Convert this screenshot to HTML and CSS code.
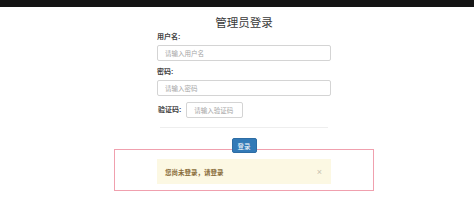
FILE: index.html
```html
<!DOCTYPE html>
<html lang="zh-CN">
<head>
  <meta charset="UTF-8" />
  <title>管理员登录</title>
  <link rel="stylesheet" href="styles.css">
</head>
<body>
  <div class="topbar"></div>

  <div class="page">
    <h1 class="title">管理员登录</h1>

    <form class="login-form">
      <label class="field-label">用户名:</label>
      <input class="field-input" type="text" placeholder="请输入用户名">

      <label class="field-label">密码:</label>
      <input class="field-input" type="password" placeholder="请输入密码">

      <div class="captcha-row">
        <label class="field-label inline">验证码:</label>
        <input class="field-input captcha-input" type="text" placeholder="请输入验证码">
      </div>

      <hr class="divider">

      <div class="submit-row">
        <button type="button" class="login-btn">登录</button>
      </div>
    </form>

    <div class="notice-box">
      <div class="alert">
        <span class="alert-text">您尚未登录，请登录</span>
        <span class="alert-close">×</span>
      </div>
    </div>
  </div>
</body>
</html>
```

FILE: styles.css
```css
body {
  margin: 0;
  background-color: #fff;
  font-family: "Liberation Sans", "Noto Sans CJK SC", sans-serif;
  color: #333;
}

.topbar {
  height: 7px;
  background-color: #141414;
}

.page {
  padding-left: 14px;
  display: flex;
  flex-direction: column;
  align-items: center;
}

.title {
  margin: 9px 0 0;
  font-size: 11.5px;
  line-height: 14px;
  font-weight: normal;
  color: #3a3a3a;
}

.login-form {
  width: 174px;
  margin-top: 2px;
  display: flex;
  flex-direction: column;
}

.field-label {
  font-size: 7px;
  line-height: 10px;
  font-weight: bold;
  color: #444;
}

.field-input {
  box-sizing: border-box;
  height: 16px;
  margin: 3px 0 6px;
  padding: 0 7px;
  border: 1px solid #d4d4d4;
  border-radius: 2px;
  font-family: inherit;
  font-size: 6.5px;
  outline: none;
}

.field-input::placeholder {
  color: #a5a5a5;
}

.captcha-row {
  display: flex;
  align-items: center;
  gap: 5px;
}

.captcha-row .field-label {
  margin-left: 1px;
}

.captcha-input {
  width: 57px;
  margin: 0;
}

.divider {
  margin: 9px 3px 0;
  border: none;
  border-top: 1px solid #eee;
}

.submit-row {
  display: flex;
  justify-content: center;
  margin-top: 10px;
  position: relative;
  z-index: 1;
}

.login-btn {
  width: 25px;
  height: 15px;
  padding: 0;
  border: 1px solid #2e6da4;
  border-radius: 2px;
  background-color: #337ab7;
  color: #fff;
  font-family: inherit;
  font-size: 6.5px;
  cursor: pointer;
}

.notice-box {
  width: 260px;
  box-sizing: border-box;
  margin-top: -4px;
  padding: 9px 0 6px;
  border: 1px solid #f0a0ae;
  display: flex;
  justify-content: center;
}

.alert {
  width: 174px;
  height: 25px;
  box-sizing: border-box;
  padding: 0 8px;
  background-color: #fcf8e3;
  display: flex;
  align-items: center;
  justify-content: space-between;
  color: #8a6d3b;
}

.alert-text {
  font-size: 6.5px;
  font-weight: bold;
}

.alert-close {
  font-size: 9px;
  color: #c8c2b0;
  margin-right: 1px;
}
```
